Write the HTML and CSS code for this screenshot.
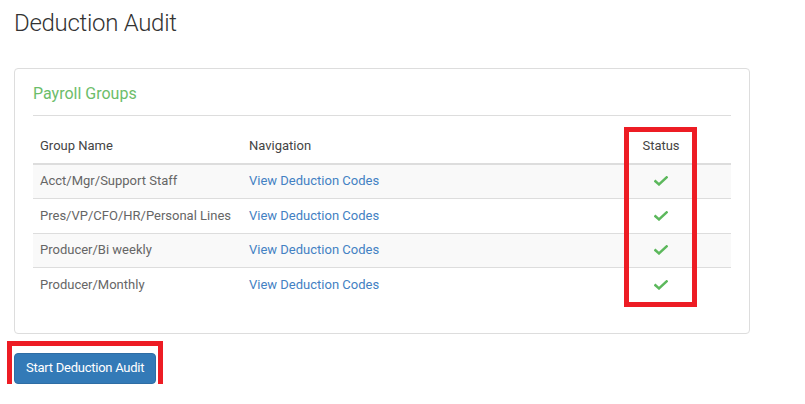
FILE: index.html
```html
<!DOCTYPE html>
<html lang="en">
<head>
<meta charset="utf-8">
<title>Deduction Audit</title>
<link rel="stylesheet" href="styles.css">
</head>
<body>
<div class="page">
  <h1 class="title">Deduction Audit</h1>
  <section class="panel">
    <h2 class="panel-title">Payroll Groups</h2>
    <hr class="rule">
    <table class="grid">
      <colgroup>
        <col class="c-name"><col class="c-nav"><col class="c-status">
      </colgroup>
      <thead>
        <tr><th>Group Name</th><th>Navigation</th><th class="center">Status</th></tr>
      </thead>
      <tbody>
        <tr><td>Acct/Mgr/Support Staff</td><td><a href="#">View Deduction Codes</a></td><td class="center"><svg class="check" viewBox="0 0 14 10"><path d="M1.4 5.2 L5 8.4 L12.6 1.4"/></svg></td></tr>
        <tr><td>Pres/VP/CFO/HR/Personal Lines</td><td><a href="#">View Deduction Codes</a></td><td class="center"><svg class="check" viewBox="0 0 14 10"><path d="M1.4 5.2 L5 8.4 L12.6 1.4"/></svg></td></tr>
        <tr><td>Producer/Bi weekly</td><td><a href="#">View Deduction Codes</a></td><td class="center"><svg class="check" viewBox="0 0 14 10"><path d="M1.4 5.2 L5 8.4 L12.6 1.4"/></svg></td></tr>
        <tr><td>Producer/Monthly</td><td><a href="#">View Deduction Codes</a></td><td class="center"><svg class="check" viewBox="0 0 14 10"><path d="M1.4 5.2 L5 8.4 L12.6 1.4"/></svg></td></tr>
      </tbody>
    </table>
  </section>
  <div class="actions">
    <button class="btn-primary" type="button">Start Deduction Audit</button>
  </div>
  <div class="annot annot-status"></div>
  <div class="annot annot-button"></div>
</div>
</body>
</html>
```

FILE: styles.css
```css
html, body {
  margin: 0;
  padding: 0;
  background: #fff;
}
body {
  font-family: Roboto, "Liberation Sans", sans-serif;
  font-size: 13px;
  color: #666;
}
.page {
  position: relative;
  padding: 10px 0 0 14px;
  width: 736px;
}
.title {
  margin: 0;
  font-size: 24px;
  font-weight: 300;
  line-height: 26.4px;
  letter-spacing: -0.3px;
  color: #333;
}
.panel {
  margin-top: 31.6px;
  border: 1px solid #ddd;
  border-radius: 4px;
  padding: 13px 18px 31px;
  box-sizing: border-box;
}
.panel-title {
  margin: 0;
  font-size: 16px;
  font-weight: 400;
  line-height: 23px;
  color: #6cbd6a;
}
.rule {
  border: 0;
  border-top: 1px solid #ddd;
  margin: 10px 0 0;
}
.grid {
  width: 100%;
  border-collapse: collapse;
  margin-top: 13px;
  table-layout: fixed;
}
.c-name { width: 208px; }
.c-nav { width: 350px; }
.c-status { width: 140px; }
.grid th {
  text-align: left;
  font-weight: 400;
  color: #444;
  padding: 7.5px 7px;
  line-height: 18.5px;
  border-bottom: 2px solid #ddd;
  vertical-align: bottom;
}
.grid td {
  padding: 7.5px 7px;
  line-height: 18.5px;
  border-top: 1px solid #ddd;
  white-space: nowrap;
}
.grid tbody tr:first-child td { border-top: 0; }
.grid tbody tr:nth-child(odd) td { background: #f9f9f9; }
.grid .center { text-align: center; }
.grid td:nth-child(2),
.grid th:nth-child(2) { padding-left: 8px; }
.grid a {
  color: #4381c3;
  text-decoration: none;
}
.check {
  width: 14px;
  height: 10px;
  vertical-align: -1px;
  fill: none;
  stroke: #5cb85c;
  stroke-width: 2.5;
  stroke-linecap: square;
  stroke-linejoin: miter;
}
.actions {
  margin-top: 19px;
}
.btn-primary {
  font-family: Roboto, "Liberation Sans", sans-serif;
  font-size: 13px;
  line-height: 18.5px;
  letter-spacing: -0.25px;
  color: #fff;
  background: #337ab7;
  border: 1px solid #2e6da4;
  border-radius: 4px;
  padding: 5.25px 11px;
  height: 31px;
  white-space: nowrap;
  cursor: pointer;
}
.annot {
  position: absolute;
  border: 5px solid #ed1c24;
  box-sizing: border-box;
  pointer-events: none;
}
.annot-status {
  left: 624px;
  top: 127px;
  width: 73px;
  height: 180px;
}
.annot-button {
  left: 7px;
  top: 341px;
  width: 156px;
  height: 55px;
}
```
